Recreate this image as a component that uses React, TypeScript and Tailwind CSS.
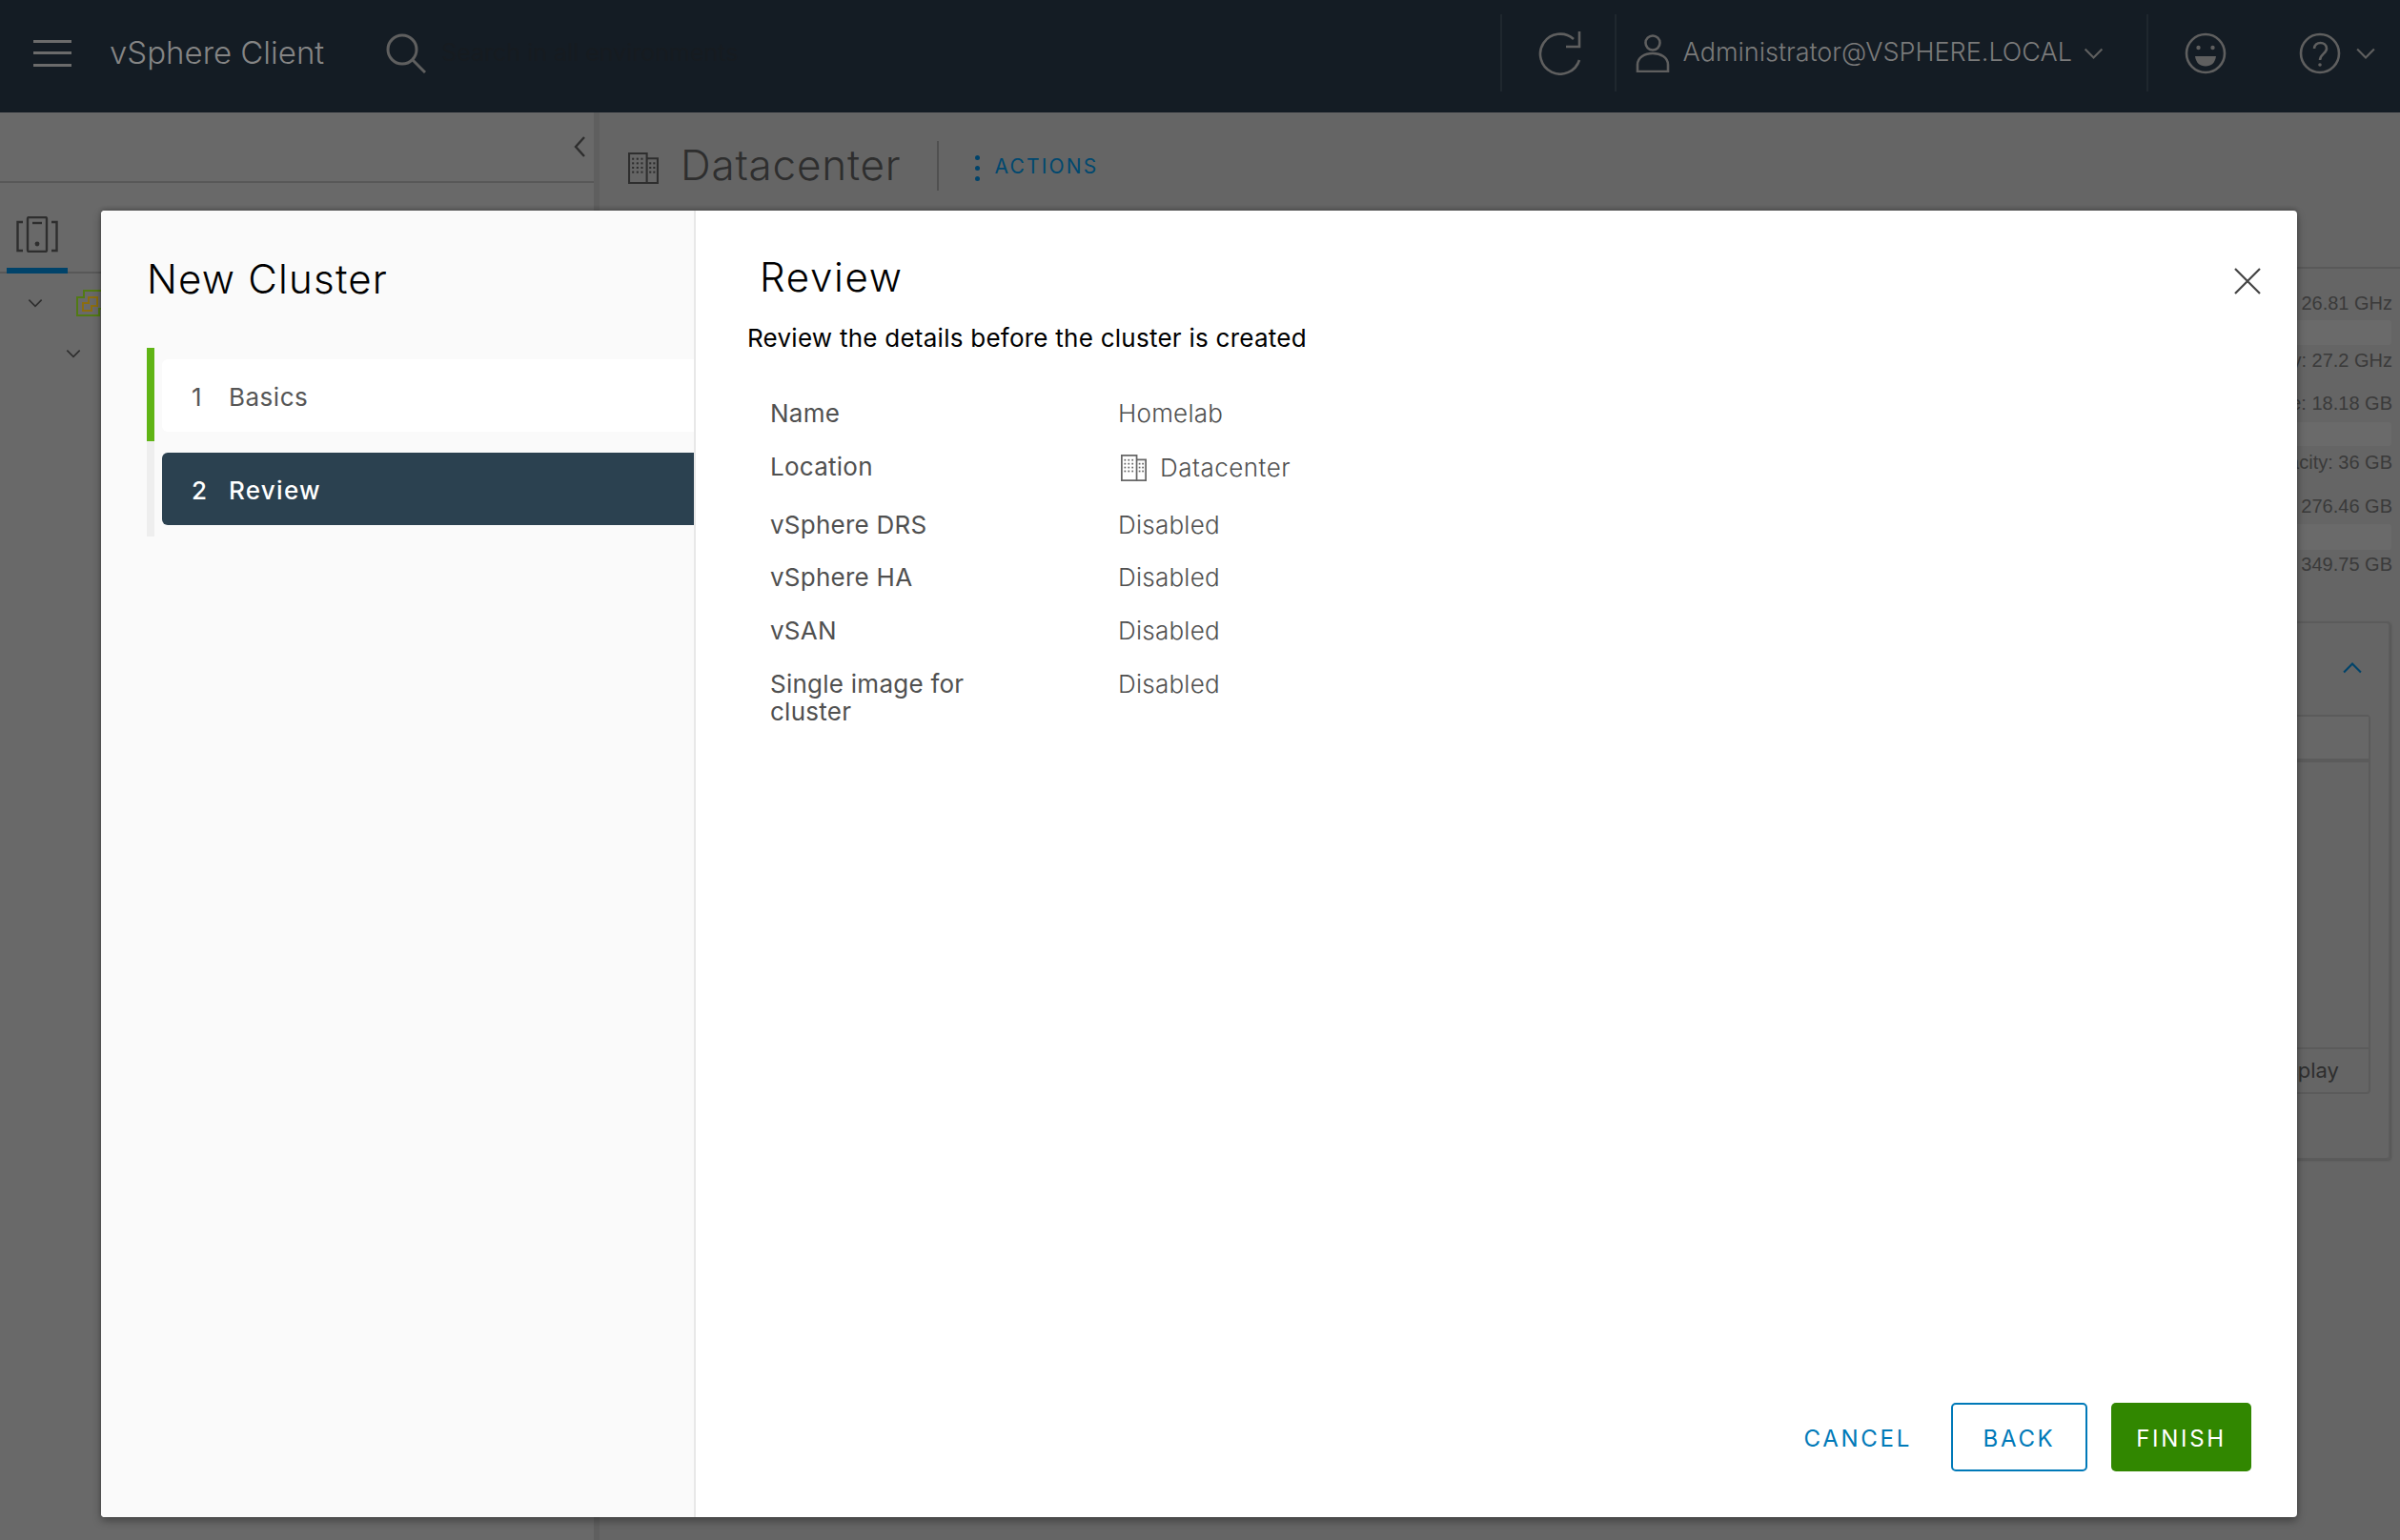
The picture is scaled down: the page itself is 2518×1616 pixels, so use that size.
import type { ReactNode } from "react";

const sans = "font-['Inter','Noto_Sans',sans-serif]";

function Chevron({ className, dir = "down" }: { className: string; dir?: "down" | "up" | "left" }) {
  const d = dir === "down" ? "M2 4 L12 14 L22 4" : dir === "up" ? "M2 14 L12 4 L22 14" : "M14 2 L5 12 L14 22";
  return (
    <svg viewBox={dir === "left" ? "0 0 18 24" : "0 0 24 18"} fill="none" stroke="currentColor" strokeWidth="2.4" className={className}>
      <path d={d} />
    </svg>
  );
}

function BuildingIcon({ className }: { className: string }) {
  const left = [5, 9.5, 14];
  const right = [22.5, 26.5];
  const rows = [6.5, 11, 15.5, 20];
  return (
    <svg viewBox="0 0 31 32" fill="none" stroke="currentColor" strokeWidth="2" className={className}>
      <path d="M1 31 V1 H19 V31 Z" />
      <path d="M19 6 H30 V31 H19" />
      {rows.map((y) =>
        left.map((x) => <rect key={`${x}-${y}`} x={x - 1} y={y - 1} width="2" height="2" fill="currentColor" stroke="none" />),
      )}
      {rows.slice(1).map((y) =>
        right.map((x) => <rect key={`${x}-${y}`} x={x - 1} y={y - 1} width="2" height="2" fill="currentColor" stroke="none" />),
      )}
    </svg>
  );
}

function Step({ n, label, active, done }: { n: number; label: string; active?: boolean; done?: boolean }) {
  return (
    <div className={`border-l-8 pl-2 pt-3 ${done ? "border-[#60b515] pb-[10px]" : "border-[#eeeeee] pb-3"}`}>
      <div
        className={`flex h-[76px] items-center rounded-l-[6px] pt-[3px] text-[26px] ${
          active ? "bg-[#2b4150] font-medium tracking-[1.3px] text-white" : "bg-white tracking-[0.5px] text-[#565656]"
        }`}
      >
        <span className="w-[70px] pl-[31px]">{n}</span>
        <span>{label}</span>
      </div>
    </div>
  );
}

function Row({ label, children, className }: { label: string; children: ReactNode; className: string }) {
  return (
    <div className={`flex text-[26px] leading-[29px] text-[#505050] ${className}`}>
      <div className="w-[365px] pr-[90px] tracking-[0.25px]">{label}</div>
      <div className="font-light tracking-[0.25px]">{children}</div>
    </div>
  );
}

export default function App() {
  return (
    <div className={`relative h-[1616px] w-[2518px] overflow-hidden bg-[#656565] ${sans}`}>
      {/* top bar */}
      <header className="flex h-[118px] items-center bg-[#141c24] pb-[7px] pl-[35px] text-[#7a7a7a]">
        <div className="flex h-[28px] w-[40px] flex-col justify-between">
          <div className="h-[3px] bg-[#6b6b6b]" />
          <div className="h-[3px] bg-[#6b6b6b]" />
          <div className="h-[3px] bg-[#6b6b6b]" />
        </div>
        <span className="ml-[40px] text-[33px] font-light text-[#858585]">vSphere Client</span>
        <svg viewBox="0 0 42 42" fill="none" stroke="#5f5f5f" strokeWidth="3" className="ml-[65px] size-[42px]">
          <circle cx="17" cy="17" r="15" />
          <path d="M28 28 L41 41" />
        </svg>
        <span className="ml-[16px] text-[25px] text-[#161b20]">Search in all environments</span>

        <div className="ml-auto flex h-[81px] items-center">
          <div className="h-full w-[2px] bg-[#1f272e]" />
          <svg viewBox="0 0 46 47" fill="none" stroke="#5f5f5f" strokeWidth="2.6" className="ml-[38px] h-[47px] w-[46px]">
            <path d="M37 9 A21 21 0 1 0 43 31" />
            <path d="M43 1 V17 H29" />
          </svg>
          <div className="ml-[34px] h-full w-[2px] bg-[#1f272e]" />
          <svg viewBox="0 0 36 40" fill="none" stroke="#5f5f5f" strokeWidth="2.6" className="ml-[20px] h-[40px] w-[36px]">
            <circle cx="18" cy="9" r="7.5" />
            <path d="M2 39 V32 C2 24 10 20 18 20 C26 20 34 24 34 32 V39 Z" />
          </svg>
          <span className="ml-[14px] text-[27px] font-light">Administrator@VSPHERE.LOCAL</span>
          <Chevron className="ml-[11px] h-[16px] w-[23px] text-[#5f5f5f]" />
          <div className="ml-[44px] h-full w-[2px] bg-[#1f272e]" />
          <svg viewBox="0 0 44 44" fill="none" stroke="#5f5f5f" strokeWidth="2.6" className="ml-[38px] size-[44px]">
            <circle cx="22" cy="22" r="20" />
            <circle cx="14.5" cy="16" r="2.2" fill="#5f5f5f" stroke="none" />
            <circle cx="29.5" cy="16" r="2.2" fill="#5f5f5f" stroke="none" />
            <path d="M11 25 H33 C32 32 28 35.5 22 35.5 C16 35.5 12 32 11 25 Z" fill="#5f5f5f" stroke="none" />
          </svg>
          <svg viewBox="0 0 44 44" fill="none" stroke="#5f5f5f" strokeWidth="2.6" className="ml-[76px] size-[44px]">
            <circle cx="22" cy="22" r="20" />
            <path d="M16 17 C16 9 29 9 29 17 C29 22 22 23 22 29" />
            <circle cx="22" cy="34" r="1.8" fill="#5f5f5f" stroke="none" />
          </svg>
          <Chevron className="ml-[15px] mr-[25px] h-[16px] w-[22px] text-[#5f5f5f]" />
        </div>
      </header>

      <div className="flex h-[1498px]">
        {/* sidebar, mostly under the modal */}
        <aside className="w-[629px] shrink-0 border-r-[6px] border-[#5f5f5f] bg-[#696969]">
          <div className="flex h-[74px] items-center justify-end border-b-2 border-[#585858] pr-[6px]">
            <Chevron dir="left" className="h-[24px] w-[18px] text-[#2e2e2e]" />
          </div>
          <div className="relative h-[95px] border-b-2 border-[#585858] pl-[17px] pt-[35px]">
            <svg viewBox="0 0 44 38" fill="none" stroke="#2e2e2e" strokeWidth="2.4" className="h-[38px] w-[44px]">
              <path d="M7 6 H1.5 V36 H7" />
              <path d="M37 6 H42.5 V36 H37" />
              <rect x="12" y="1" width="20" height="36" rx="1.5" />
              <path d="M17 7 H27" />
              <circle cx="22" cy="29" r="2.4" fill="#2e2e2e" stroke="none" />
            </svg>
            <div className="absolute bottom-[-2px] left-[7px] h-[6px] w-[64px] bg-[#00436a]" />
          </div>
          <div className="flex h-[62px] items-center pl-[29px]">
            <Chevron className="h-[12px] w-[16px] text-[#2e2e2e]" />
            <svg viewBox="0 0 30 28" fill="none" strokeWidth="2" className="ml-[35px] h-[28px] w-[30px]">
              <path d="M1 8 H8 V1 H30 V20 H24 V27 H1 Z" stroke="#527a14" />
              <path d="M7 14 H13 V8 H22 V17 H16 V22 H7 Z" stroke="#8a6d10" />
            </svg>
          </div>
          <div className="pl-[69px] pt-[16px]">
            <Chevron className="h-[12px] w-[16px] text-[#2e2e2e]" />
          </div>
        </aside>

        {/* main pane, mostly under the modal */}
        <main className="relative flex-1">
          <div className="flex h-[164px] items-start border-b-2 border-[#595959] pl-[30px] pt-[30px]">
            <BuildingIcon className="mt-[12px] h-[33px] w-[32px] text-[#2e2e2e]" />
            <h1 className="ml-[23px] text-[44px] leading-[50px] font-light tracking-[0.8px] text-[#2e2e2e]">Datacenter</h1>
            <div className="ml-[38px] h-[52px] w-[2px] bg-[#505050]" />
            <div className="ml-[38px] mt-[15px] flex h-[27px] flex-col justify-between">
              <div className="size-[5px] rounded-full bg-[#00436a]" />
              <div className="size-[5px] rounded-full bg-[#00436a]" />
              <div className="size-[5px] rounded-full bg-[#00436a]" />
            </div>
            <span className="ml-[15px] mt-[13px] text-[21px] leading-[28px] tracking-[2.2px] text-[#00486f]">ACTIONS</span>
          </div>

          <div className="flex flex-col items-end pr-[8px] pt-[25px] font-['Liberation_Sans',sans-serif] text-[20px] leading-[23px] text-[#3a3a3a]">
            <span>Free: 26.81 GHz</span>
            <div className="mr-px mt-[6px] h-[26px] w-[160px] rounded-[3px] bg-[#6a6a6a]" />
            <span className="mt-[5px]">Capacity: 27.2 GHz</span>
            <span className="mt-[22px]">Free: 18.18 GB</span>
            <div className="mr-px mt-[8px] h-[25px] w-[160px] rounded-[3px] bg-[#6a6a6a]" />
            <span className="mt-[6px]">Capacity: 36 GB</span>
            <span className="mt-[23px]">Free: 276.46 GB</span>
            <div className="mr-px mt-[7px] h-[27px] w-[160px] rounded-[3px] bg-[#6a6a6a]" />
            <span className="mt-[4px]">Capacity: 349.75 GB</span>
          </div>

          <section className="absolute left-[40px] right-[10px] top-[534px] h-[565px] rounded-[4px] border-2 border-[#5b5b5b] shadow-[1px_1px_2px_#555]">
            <div className="flex h-[96px] items-start justify-end pr-[24px] pt-[39px]">
              <Chevron dir="up" className="h-[16px] w-[28px] text-[#00436a]" />
            </div>
            <div className="ml-[20px] mr-[19px] flex h-[398px] flex-col rounded-[4px] border-2 border-[#5b5b5b]">
              <div className="h-[48px] border-b-4 border-[#5b5b5b] bg-[#676767]" />
              <div className="flex-1" />
              <div className="flex h-[47px] items-center justify-end border-t-2 border-[#5b5b5b] pr-[31px] text-[22px] text-[#2e2e2e]">
                No items to display
              </div>
            </div>
          </section>
        </main>
      </div>

      {/* wizard */}
      <div className="absolute left-[106px] top-[221px] flex h-[1371px] w-[2304px] overflow-hidden rounded-[4px] bg-white shadow-[0_4px_8px_rgba(0,0,0,0.35),0_-2px_4px_rgba(0,0,0,0.2)]">
        <div className="w-[624px] shrink-0 border-r-2 border-[#e8e8e8] bg-[#fafafa] pl-[48px]">
          <h2 className="mt-[48px] text-[42px] leading-[48px] font-light tracking-[1.2px] text-black">New Cluster</h2>
          <nav className="mt-[48px]">
            <Step n={1} label="Basics" done />
            <Step n={2} label="Review" active />
          </nav>
        </div>

        <div className="flex min-w-0 flex-1 flex-col">
          <div className="flex items-start justify-between pl-[67px] pr-[38px]">
            <h3 className="mt-[47px] text-[42px] leading-[46px] font-light tracking-[1.7px] text-black">Review</h3>
            <svg viewBox="0 0 28 28" fill="none" stroke="#444444" strokeWidth="2.2" className="mt-[60px] size-[28px]">
              <path d="M1 1 L27 27 M27 1 L1 27" />
            </svg>
          </div>
          <p className="ml-[54px] mt-[23px] text-[26px] leading-[36px] tracking-[0.25px] text-black">
            Review the details before the cluster is created
          </p>

          <div className="ml-[78px] mt-[46px]">
            <Row label="Name" className="">Homelab</Row>
            <Row label="Location" className="mt-[27px]">
              <span className="flex items-center">
                <BuildingIcon className="ml-[3px] mt-[2px] h-[28px] w-[27px] text-[#666666]" />
                <span className="ml-[14px] tracking-[0.5px]">Datacenter</span>
              </span>
            </Row>
            <Row label="vSphere DRS" className="mt-[31px]">Disabled</Row>
            <Row label="vSphere HA" className="mt-[26px]">Disabled</Row>
            <Row label="vSAN" className="mt-[27px]">Disabled</Row>
            <Row label="Single image for cluster" className="mt-[27px]">Disabled</Row>
          </div>

          <div className="mt-auto flex items-center justify-end pb-[48px] pr-[48px] text-[24px] tracking-[2.7px]">
            <button className="mr-[9px] h-[72px] px-[32px] pt-[3px] text-[#0079b8]">CANCEL</button>
            <button className="h-[72px] w-[143px] rounded-[5px] border-2 border-[#0079b8] pt-[3px] text-[#0079b8]">BACK</button>
            <button className="ml-[25px] h-[72px] w-[147px] rounded-[5px] bg-[#318700] pt-[3px] text-white">FINISH</button>
          </div>
        </div>
      </div>
    </div>
  );
}
